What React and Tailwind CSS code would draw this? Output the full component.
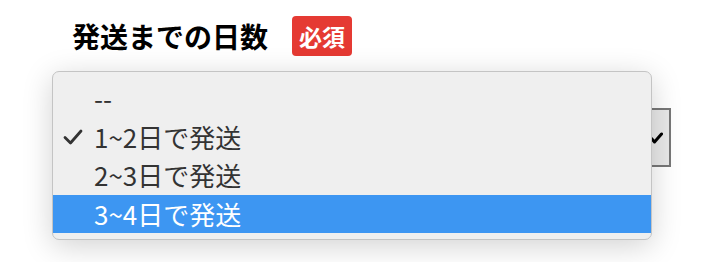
import React from "react";

const font = { fontFamily: '"Noto Sans CJK JP", "Noto Sans", sans-serif' };

export default function App() {
  const items = ["--", "1~2日で発送", "2~3日で発送", "3~4日で発送"];
  return (
    <div className="w-[708px] h-[262px] bg-white relative overflow-hidden" style={font}>
      <div className="flex items-center pl-[72px] pt-[16px] h-[40px] gap-[24px] box-content">
        <span className="text-[28px] font-bold text-black leading-none">発送までの日数</span>
        <span className="w-[60px] h-[40px] rounded-[4px] bg-[#e53a33] text-white text-[23px] font-bold flex items-center justify-center leading-none">必須</span>
      </div>
      <div className="ml-[52px] mt-[52px] w-[619px] h-[59px] border-2 border-[#777] bg-[#e9e9e9] flex items-center justify-end pr-[6px]">
        <svg width="13" height="12" viewBox="0 0 13 12">
          <path d="M1.5 6.5 L4.5 10 L11.5 2" fill="none" stroke="#000" strokeWidth="3" strokeLinecap="round" strokeLinejoin="round" />
        </svg>
      </div>
      <div className="absolute left-[52px] top-[71px] w-[600px] h-[169px] rounded-[7px] bg-[#efefef] border border-[#c4c4c4] shadow-[0_6px_30px_rgba(0,0,0,0.18)] py-[7px] overflow-hidden">
        {items.map((t, i) => (
          <div
            key={t}
            className={`h-[38.5px] flex items-center relative pl-[41px] text-[26px] ${i === 3 ? "bg-[#3d96f2] text-white" : "text-[#333]"}`}
          >
            {i === 1 && (
              <svg className="absolute left-[10px]" width="20" height="16" viewBox="0 0 20 16">
                <path d="M2 8.5 L7.5 14 L18 2" fill="none" stroke="#333" strokeWidth="2.8" strokeLinecap="round" strokeLinejoin="round" />
              </svg>
            )}
            <span className="leading-none">{t}</span>
          </div>
        ))}
      </div>
    </div>
  );
}
